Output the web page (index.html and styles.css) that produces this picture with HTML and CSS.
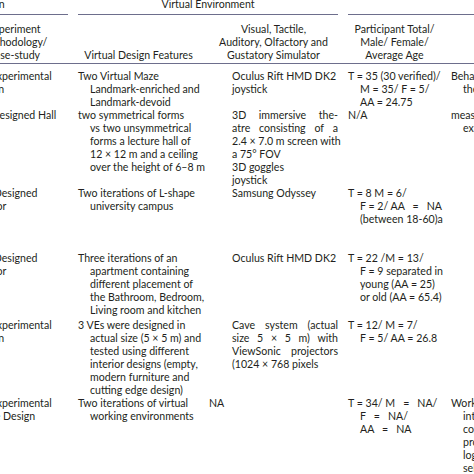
FILE: index.html
```html
<!DOCTYPE html>
<html>
<head>
<meta charset="utf-8">
<link rel="stylesheet" href="styles.css">
</head>
<body>
<div class="table">
  <div class="row group">
    <div class="g g1">Study Design</div>
    <div class="g g2">Virtual Environment</div>
    <div class="g g3">Measurements and Outcomes</div>
  </div>
  <div class="row head">
    <div class="h">Author(s)/<br>Year</div>
    <div class="h">Experiment<br>Methodology/<br>Case-study</div>
    <div class="h">Virtual Design Features</div>
    <div class="h">Visual, Tactile,<br>Auditory, Olfactory and<br>Gustatory Simulator</div>
    <div class="h">Participant Total/<br>Male/ Female/<br>Average Age</div>
    <div class="h">Measures</div>
  </div>

  <div class="row r1">
    <div class="c"></div>
    <div class="c"><div class="l">Quasi-Experimental</div><div class="l i">Design</div></div>
    <div class="c"><div class="l">Two Virtual Maze</div><div class="l i">Landmark-enriched and</div><div class="l i">Landmark-devoid</div></div>
    <div class="c p3"><div class="l">Oculus Rift HMD DK2</div><div class="l">joystick</div></div>
    <div class="c"><div class="l">T = 35 (30 verified)/</div><div class="l i">M = 35/ F = 5/</div><div class="l i">AA = 24.75</div></div>
    <div class="c"><div class="l">Behavioural data from</div><div class="l i">the maze task</div></div>
  </div>

  <div class="row r2">
    <div class="c"></div>
    <div class="c"><div class="l">Newly-designed Hall</div></div>
    <div class="c"><div class="l">two symmetrical forms</div><div class="l i">vs two unsymmetrical</div><div class="l i">forms a lecture hall of</div><div class="l i">12 × 12 m and a ceiling</div><div class="l i">over the height of 6–8 m</div></div>
    <div class="c p3"><div class="l j">3D immersive the-</div><div class="l j">atre consisting of a</div><div class="l j">2.4 × 7.0 m screen with</div><div class="l">a 75° FOV</div><div class="l">3D goggles</div><div class="l">joystick</div></div>
    <div class="c"><div class="l">N/A</div></div>
    <div class="c"><div class="l">measured user</div><div class="l i">experience</div></div>
  </div>

  <div class="row r3">
    <div class="c"></div>
    <div class="c"><div class="l">Virtual Designed</div><div class="l i">Interior</div></div>
    <div class="c"><div class="l">Two iterations of L-shape</div><div class="l i">university campus</div></div>
    <div class="c p3"><div class="l">Samsung Odyssey</div></div>
    <div class="c"><div class="l">T = 8 M = 6/</div><div class="l i">F = 2/ AA &ensp;= &ensp;NA</div><div class="l i">(between 18-60)a</div></div>
    <div class="c"></div>
  </div>

  <div class="row r4">
    <div class="c"></div>
    <div class="c"><div class="l">Virtual Designed</div><div class="l i">Interior</div></div>
    <div class="c"><div class="l">Three iterations of an</div><div class="l i">apartment containing</div><div class="l i">different placement of</div><div class="l i">the Bathroom, Bedroom,</div><div class="l i">Living room and kitchen</div></div>
    <div class="c p3"><div class="l">Oculus Rift HMD DK2</div></div>
    <div class="c"><div class="l">T = 22 /M = 13/</div><div class="l i">F = 9 separated in</div><div class="l i">young (AA = 25)</div><div class="l i">or old (AA = 65.4)</div></div>
    <div class="c"></div>
  </div>

  <div class="row r5">
    <div class="c"></div>
    <div class="c"><div class="l">Quasi-Experimental</div><div class="l i">Design</div></div>
    <div class="c"><div class="l">3 VEs were designed in</div><div class="l i">actual size (5 × 5 m) and</div><div class="l i">tested using different</div><div class="l i">interior designs (empty,</div><div class="l i">modern furniture and</div><div class="l i">cutting edge design)</div></div>
    <div class="c p3"><div class="l j">Cave system (actual</div><div class="l j">size 5 × 5 m) with</div><div class="l j">ViewSonic projectors</div><div class="l">(1024 × 768 pixels</div></div>
    <div class="c"><div class="l">T = 12/ M = 7/</div><div class="l i">F = 5/ AA = 26.8</div></div>
    <div class="c"></div>
  </div>

  <div class="row r6">
    <div class="c"></div>
    <div class="c"><div class="l">Quasi-Experimental</div><div class="l i">Office Design</div></div>
    <div class="c"><div class="l">Two iterations of virtual</div><div class="l i">working environments</div></div>
    <div class="c"><div class="l">NA</div></div>
    <div class="c"><div class="l">T = 34/ M &ensp;= &ensp;NA/</div><div class="l i">F &ensp;= &ensp;NA/</div><div class="l i">AA &ensp;= &ensp;NA</div></div>
    <div class="c"><div class="l">Work performance</div><div class="l i">interviews,</div><div class="l i">cognitive tests,</div><div class="l i">productivity</div><div class="l i">logs and</div><div class="l i">self-reports</div></div>
  </div>
</div>
</body>
</html>
```
FILE: styles.css
```css
html, body {
  margin: 0;
  padding: 0;
  overflow: hidden;
  background: #ffffff;
}
body {
  font-family: Lato, "Liberation Sans", sans-serif;
  font-size: 10.6px;
  line-height: 13px;
  color: #231f20;
}
.table {
  margin: -2px 0 0 -120px;
  width: 1000px;
}
.row {
  display: grid;
  grid-template-columns: 70px 108px 121px 129px 93px 300px;
  column-gap: 10px;
}
.group .g {
  text-align: center;
  padding-bottom: 3px;
  border-bottom: 1px solid #6d6e8c;
  white-space: nowrap;
}
.g1 { grid-column: 1 / 3; }
.g2 { grid-column: 3 / 5; }
.g3 { grid-column: 5 / 7; }
.head {
  padding: 8px 0 1px;
  border-bottom: 1px solid #6d6e8c;
  align-items: end;
}
.h {
  text-align: center;
  white-space: nowrap;
}
.l {
  white-space: nowrap;
}
.i {
  padding-left: 12px;
}
.p3 {
  padding-left: 23px;
}
.j {
  text-align: justify;
  text-align-last: justify;
}
.r1 { padding-top: 6px; }
.r3 { height: 65px; }
.r4 { height: 67px; }
```
